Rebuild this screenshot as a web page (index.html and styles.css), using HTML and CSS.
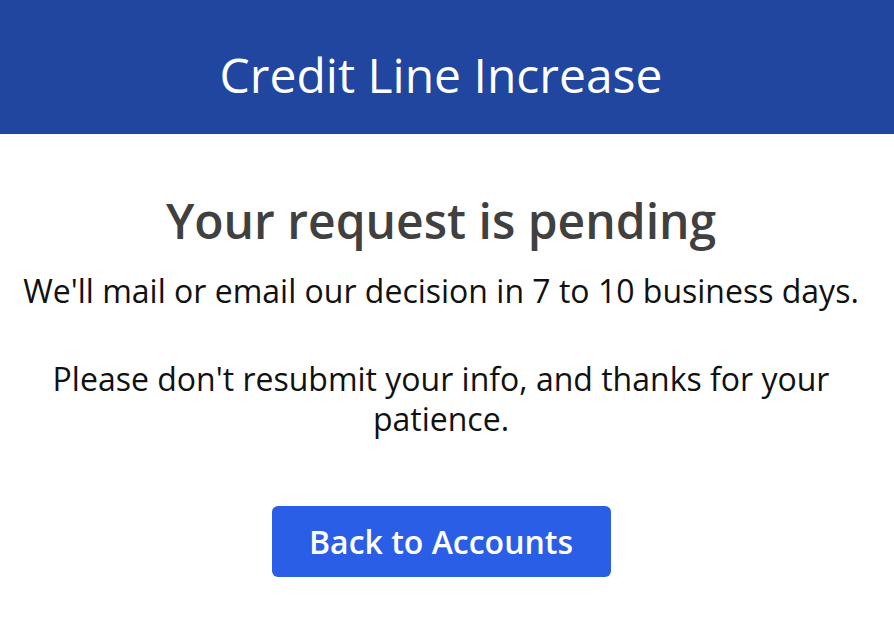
FILE: index.html
```html
<!DOCTYPE html>
<html lang="en">

<head>
    <meta charset="UTF-8">
    <meta name="viewport" content="width=device-width, initial-scale=1.0">
    <title>Credit Line Increase</title>
    <link rel="stylesheet" href="styles.css">
</head>

<body>
    <header class="header">
        <h1 class="header-title">Credit Line Increase</h1>
    </header>

    <main class="content">
        <h2 class="status-title">Your request is pending</h2>
        <p class="status-text">We'll mail or email our decision in 7 to 10 business days.</p>
        <p class="status-text note">Please don't resubmit your info, and thanks for your patience.</p>
        <button class="btn-primary">Back to Accounts</button>
    </main>
</body>

</html>
```

FILE: styles.css
```css
* {
    margin: 0;
    padding: 0;
    box-sizing: border-box;
}

body {
    font-family: "Open Sans", "Liberation Sans", sans-serif;
    background-color: #fff;
    color: #111;
}

.header {
    height: 134px;
    padding: 15px 12px 0 0;
    background-color: #2046a0;
    display: flex;
    align-items: center;
    justify-content: center;
}

.header-title {
    color: #fff;
    font-size: 48px;
    font-weight: 400;
}

.content {
    display: flex;
    flex-direction: column;
    align-items: center;
    text-align: center;
    padding: 59px 12px 0 0;
}

.status-title {
    font-size: 48px;
    font-weight: 600;
    color: #404040;
    line-height: 56px;
}

.status-text {
    margin-top: 22px;
    font-size: 32px;
    line-height: 40px;
    max-width: 850px;
}

.status-text.note {
    margin-top: 48px;
}

.btn-primary {
    margin-top: 67px;
    width: 339px;
    height: 71px;
    border: none;
    border-radius: 6px;
    background-color: #2b5ee6;
    color: #fff;
    font-family: inherit;
    font-size: 32px;
    font-weight: 600;
    cursor: pointer;
}
```
